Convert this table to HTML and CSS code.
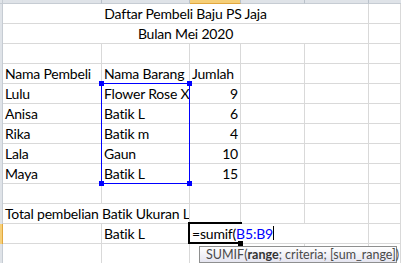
FILE: index.html
```html
<!DOCTYPE html>
<html>
<head>
<meta charset="utf-8">
<link rel="stylesheet" href="styles.css">
</head>
<body>
<div class="sheet">
  <div class="grid">
    <!-- column header -->
    <div class="hc corner"></div>
    <div class="hc"></div>
    <div class="hc"></div>
    <div class="hc hc-active"></div>
    <div class="hc"></div>
    <div class="hc"></div>
    <div class="hc last"></div>

    <!-- row 1 -->
    <div class="rh"></div>
    <div class="c merge5 center">Daftar Pembeli Baju PS Jaja</div>
    <div class="c"></div>
    <!-- row 2 -->
    <div class="rh"></div>
    <div class="c merge5 center">Bulan Mei 2020</div>
    <div class="c"></div>
    <!-- row 3 -->
    <div class="rh"></div>
    <div class="c"></div><div class="c"></div><div class="c"></div><div class="c"></div><div class="c"></div><div class="c"></div>
    <!-- row 4 -->
    <div class="rh"></div>
    <div class="c">Nama Pembeli</div><div class="c">Nama Barang</div><div class="c">Jumlah</div><div class="c"></div><div class="c"></div><div class="c"></div>
    <!-- row 5 -->
    <div class="rh"></div>
    <div class="c">Lulu</div><div class="c">Flower Rose X</div><div class="c num">9</div><div class="c"></div><div class="c"></div><div class="c"></div>
    <!-- row 6 -->
    <div class="rh"></div>
    <div class="c">Anisa</div><div class="c">Batik L</div><div class="c num">6</div><div class="c"></div><div class="c"></div><div class="c"></div>
    <!-- row 7 -->
    <div class="rh"></div>
    <div class="c">Rika</div><div class="c">Batik m</div><div class="c num">4</div><div class="c"></div><div class="c"></div><div class="c"></div>
    <!-- row 8 -->
    <div class="rh"></div>
    <div class="c">Lala</div><div class="c">Gaun</div><div class="c num">10</div><div class="c"></div><div class="c"></div><div class="c"></div>
    <!-- row 9 -->
    <div class="rh"></div>
    <div class="c">Maya</div><div class="c">Batik L</div><div class="c num">15</div><div class="c"></div><div class="c"></div><div class="c"></div>
    <!-- row 10 -->
    <div class="rh"></div>
    <div class="c"></div><div class="c"></div><div class="c"></div><div class="c"></div><div class="c"></div><div class="c"></div>
    <!-- row 11 -->
    <div class="rh"></div>
    <div class="c merge2">Total pembelian Batik Ukuran L</div><div class="c"></div><div class="c"></div><div class="c"></div><div class="c"></div>
    <!-- row 12 -->
    <div class="rh rh-active"></div>
    <div class="c"></div><div class="c">Batik L</div>
    <div class="c merge3 editor">=sumif(<span class="ref">B5:B9</span><span class="caret"></span></div>
    <div class="c"></div>
    <!-- row 13 -->
    <div class="rh"></div>
    <div class="c"></div><div class="c"></div><div class="c"></div><div class="c"></div><div class="c"></div><div class="c"></div>
  </div>

  <div class="range-sel">
    <span class="h tl"></span><span class="h tr"></span><span class="h bl"></span><span class="h br"></span>
  </div>
  <div class="active-cell"></div>
  <div class="fill-handle"></div>
  <div class="tip">SUMIF(<b>range</b>; criteria; [sum_range])</div>
</div>
</body>
</html>
```

FILE: styles.css
```css
html, body {
  margin: 0;
  padding: 0;
  background: #fff;
}
.sheet {
  position: relative;
  width: 401px;
  height: 263px;
  overflow: hidden;
  font-family: "Lato", "Liberation Sans", sans-serif;
  font-size: 14px;
  letter-spacing: -0.2px;
  color: #000;
}
.grid {
  display: grid;
  grid-template-columns: 3px 99px 88px 51px 64px 64px 1fr;
  grid-template-rows: 4px repeat(13, 20px);
}
.hc {
  box-sizing: border-box;
  background: #dfe3e8;
  border-right: 1px solid #b9c1ca;
  border-bottom: 1px solid #c6ccd3;
}
.hc.corner { border-right: 1px solid #c6ccd3; }
.hc.last { border-right: none; }
.hc-active {
  background: #f6cf78;
  border-bottom-color: #e1a73f;
}
.rh {
  box-sizing: border-box;
  background: #dfe3e8;
  border-right: 1px solid #c6ccd3;
}
.rh-active {
  background: #f6cf78;
  border-right-color: #e1a73f;
}
.c {
  box-sizing: border-box;
  border-right: 1px solid #d9d9d9;
  border-bottom: 1px solid #d9d9d9;
  display: flex;
  align-items: flex-end;
  padding: 0 2px 1px;
  white-space: nowrap;
  overflow: hidden;
  line-height: 17px;
}
.center { justify-content: center; }
.num { justify-content: flex-end; }
.merge5 { grid-column: span 5; }
.merge2 { grid-column: span 2; }
.merge3 { grid-column: span 3; }
.editor { background: #fff; }
.ref { color: #0000ff; }
.caret {
  display: inline-block;
  width: 1px;
  height: 14px;
  background: #000;
  margin-bottom: 2px;
  align-self: flex-end;
}
.range-sel {
  position: absolute;
  left: 101px;
  top: 83px;
  width: 87px;
  height: 99px;
  border: 1px solid #0000ff;
}
.range-sel .h {
  position: absolute;
  width: 5px;
  height: 5px;
  background: #0000ff;
}
.range-sel .tl { left: -3px; top: -3px; }
.range-sel .tr { right: -3px; top: -3px; }
.range-sel .bl { left: -3px; bottom: -3px; }
.range-sel .br { right: -3px; bottom: -3px; }
.active-cell {
  position: absolute;
  left: 188px;
  top: 222px;
  width: 52px;
  height: 18px;
  border: 2px solid #000;
  border-right: none;
}
.fill-handle {
  position: absolute;
  left: 238px;
  top: 241px;
  width: 5px;
  height: 5px;
  background: #000;
}
.tip {
  position: absolute;
  left: 199px;
  top: 246px;
  width: 198px;
  height: 17px;
  box-sizing: border-box;
  border: 1px solid #8e8f8f;
  background: linear-gradient(#ffffff, #e5e5f0);
  font-family: "Lato", "Liberation Sans", sans-serif;
  font-size: 12.5px;
  letter-spacing: 0;
  line-height: 15px;
  color: #4a4a4a;
  padding: 0 0 0 6px;
  white-space: nowrap;
}
.tip b { font-weight: 700; color: #333; }
```
